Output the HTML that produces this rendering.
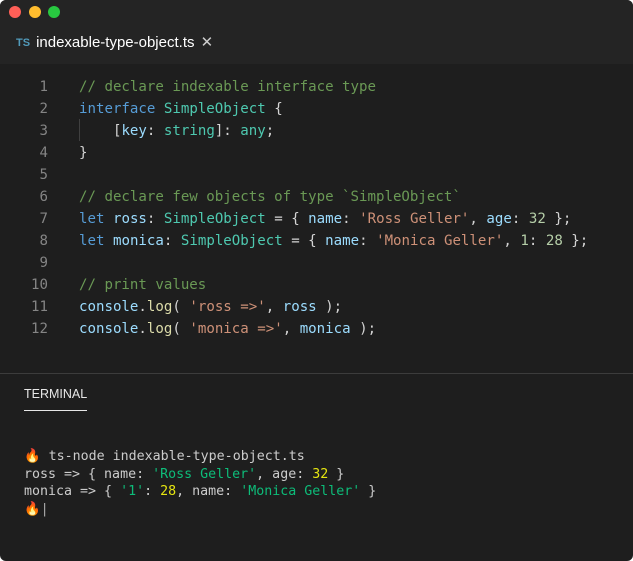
<!DOCTYPE html>
<html><head><style>
html,body{margin:0;padding:0;background:#fff;width:633px;height:561px;overflow:hidden}
.win{position:absolute;left:0;top:0;width:633px;height:561px;background:#1e1e1e;border-radius:6px;overflow:hidden}
.top{position:absolute;left:0;top:0;width:633px;height:64px;background:#242424}
.dot{position:absolute;top:6px;width:12px;height:12px;border-radius:50%}
.tab{position:absolute;left:16px;top:33px;font:15px "Liberation Sans",sans-serif;color:#fff;white-space:nowrap}
.ts{color:#519aba;font-size:11px;font-weight:bold;margin-right:6px;position:relative;top:-1px}
.code{position:absolute;left:0;top:76px;font:14.1px/22px "DejaVu Sans Mono",monospace;color:#d4d4d4;white-space:pre}
.ln{display:inline-block;width:48px;text-align:right;color:#858585;margin-right:31px}
.c{color:#6a9955}.k{color:#569cd6}.t{color:#4ec9b0}.v{color:#9cdcfe}.s{color:#ce9178}.n{color:#b5cea8}.f{color:#dcdcaa}
.sep{position:absolute;left:0;top:373px;width:633px;height:1px;background:#3c3c3c}
.term{position:absolute;left:24px;top:387px;font:12.5px "Liberation Sans",sans-serif;color:#e7e7e7}
.ul{position:absolute;left:24px;top:410px;width:63px;height:1px;background:#e7e7e7}
.out{position:absolute;left:24px;top:448px;font:13.3px/17.6px "DejaVu Sans Mono",monospace;color:#ccc;white-space:pre}
.g{color:#0dbc79}.y{color:#e5e510}
.guide{position:absolute;left:79px;top:119px;width:1px;height:22px;background:#404040}
</style></head><body><div class="win">
<div class="top">
<div class="dot" style="left:9px;background:#fe5f57"></div>
<div class="dot" style="left:29px;background:#febc2e"></div>
<div class="dot" style="left:48px;background:#28c840"></div>
<div class="tab"><span class="ts">TS</span>indexable-type-object.ts <span style="color:#ccc;margin-left:2px">✕</span></div>
</div>
<div class="guide"></div>
<div class="code"><span class="ln">1</span><span class="c">// declare indexable interface type</span>
<span class="ln">2</span><span class="k">interface</span> <span class="t">SimpleObject</span> {
<span class="ln">3</span>    [<span class="v">key</span>: <span class="t">string</span>]: <span class="t">any</span>;
<span class="ln">4</span>}
<span class="ln">5</span>
<span class="ln">6</span><span class="c">// declare few objects of type `SimpleObject`</span>
<span class="ln">7</span><span class="k">let</span> <span class="v">ross</span>: <span class="t">SimpleObject</span> = { <span class="v">name</span>: <span class="s">'Ross Geller'</span>, <span class="v">age</span>: <span class="n">32</span> };
<span class="ln">8</span><span class="k">let</span> <span class="v">monica</span>: <span class="t">SimpleObject</span> = { <span class="v">name</span>: <span class="s">'Monica Geller'</span>, <span class="n">1</span>: <span class="n">28</span> };
<span class="ln">9</span>
<span class="ln">10</span><span class="c">// print values</span>
<span class="ln">11</span><span class="v">console</span>.<span class="f">log</span>( <span class="s">'ross =&gt;'</span>, <span class="v">ross</span> );
<span class="ln">12</span><span class="v">console</span>.<span class="f">log</span>( <span class="s">'monica =&gt;'</span>, <span class="v">monica</span> );</div>
<div class="sep"></div>
<div class="term">TERMINAL</div>
<div class="ul"></div>
<div class="out"><span style="color:#f60">🔥</span> ts-node indexable-type-object.ts
ross =&gt; { name: <span class="g">'Ross Geller'</span>, age: <span class="y">32</span> }
monica =&gt; { <span class="g">'1'</span>: <span class="y">28</span>, name: <span class="g">'Monica Geller'</span> }
<span style="color:#f60">🔥</span><span style="color:#aaa">|</span></div>
</div></body></html>
